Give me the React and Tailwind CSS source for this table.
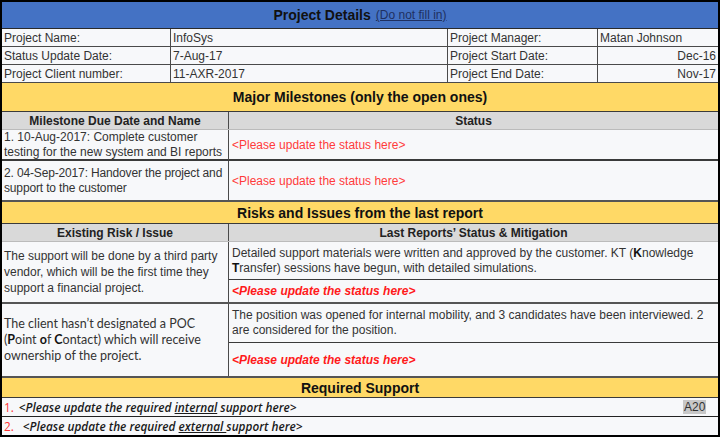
import React from "react";

const details = [
  ["Project Name:", "InfoSys", "Project Manager:", "Matan Johnson", false],
  ["Status Update Date:", "7-Aug-17", "Project Start Date:", "Dec-16", true],
  ["Project Client number:", "11-AXR-2017", "Project End Date:", "Nov-17", true],
];

function YellowBar({ children, className }) {
  return (
    <div
      className={
        "flex items-center justify-center bg-[#ffd966] border-y border-[#3a3a3a] text-[14px] font-bold text-[#111] " +
        className
      }
    >
      {children}
    </div>
  );
}

function RedNote({ strong }) {
  return (
    <span
      className={
        strong
          ? "text-[#ff1a1a] italic font-bold"
          : "text-[#ff3b3b]"
      }
    >
      {"<Please update the status here>"}
    </span>
  );
}

export default function App() {
  return (
    <div className="w-[720px] h-[437px] overflow-hidden border-2 border-black bg-[#f7f8fa] text-[12px] text-[#333] font-['Liberation_Sans',Arial,sans-serif] leading-[14px] relative">
      {/* title */}
      <div className="h-[27px] bg-[#4472c4] border-b border-[#2a2a2a] flex items-center justify-center">
        <span className="text-[14px] font-bold text-[#111]">Project Details</span>
        <span className="ml-[5px] text-[12px] underline text-[#1f3060]">(Do not fill in)</span>
      </div>

      {/* project details */}
      {details.map((r, i) => (
        <div
          key={i}
          className="grid grid-cols-[169px_277px_150px_1fr] h-[18px] border-b border-[#4a4a4a]"
        >
          <div className="px-[2px] flex items-center border-r border-[#4a4a4a]">{r[0]}</div>
          <div className="px-[2px] flex items-center border-r border-[#4a4a4a]">{r[1]}</div>
          <div className="px-[2px] flex items-center border-r border-[#4a4a4a]">{r[2]}</div>
          <div className={"px-[2px] flex items-center " + (r[4] ? "justify-end" : "")}>{r[3]}</div>
        </div>
      ))}

      {/* milestones */}
      <YellowBar className="h-[29px] border-t-0">Major Milestones (only the open ones)</YellowBar>
      <div className="grid grid-cols-[227px_1fr] h-[18px] bg-[#d9d9d9] font-bold text-[#222] border-b border-[#bbb]">
        <div className="flex items-center justify-center border-r border-[#4a4a4a]">Milestone Due Date and Name</div>
        <div className="flex items-center justify-center">Status</div>
      </div>
      <div className="grid grid-cols-[227px_1fr] h-[31px] border-b-2 border-[#3a3a3a]">
        <div className="pl-[2px] flex items-center border-r border-[#4a4a4a] leading-[15px]">
          1. 10-Aug-2017: Complete customer testing for the new system and BI reports
        </div>
        <div className="px-[3px] flex items-center"><RedNote /></div>
      </div>
      <div className="grid grid-cols-[227px_1fr] h-[39px]">
        <div className="pl-[2px] flex items-center border-r border-[#4a4a4a] leading-[15px] tracking-[-0.15px]">
          2. 04-Sep-2017: Handover the project and support to the customer
        </div>
        <div className="px-[3px] flex items-center"><RedNote /></div>
      </div>

      {/* risks */}
      <YellowBar className="h-[24px] border-t-2 border-t-[#555]">Risks and Issues from the last report</YellowBar>
      <div className="grid grid-cols-[227px_1fr] h-[18px] bg-[#d9d9d9] font-bold text-[#222] border-b border-[#bbb]">
        <div className="flex items-center justify-center border-r border-[#4a4a4a]">Existing Risk / Issue</div>
        <div className="flex items-center justify-center">Last Reports’ Status &amp; Mitigation</div>
      </div>
      <div className="grid grid-cols-[227px_1fr] h-[62px] border-b-2 border-[#555]">
        <div className="px-[2px] flex items-center border-r border-[#4a4a4a] leading-[16px]">
          The support will be done by a third party vendor, which will be the first time they support a financial project.
        </div>
        <div className="flex flex-col">
          <div className="h-[38px] px-[3px] flex items-center border-b border-[#3a3a3a] leading-[15px]">
            <span>
              Detailed support materials were written and approved by the customer. KT (<b className="text-[#111]">K</b>nowledge{" "}
              <b className="text-[#111]">T</b>ransfer) sessions have begun, with detailed simulations.
            </span>
          </div>
          <div className="flex-1 px-[3px] flex items-center"><RedNote strong /></div>
        </div>
      </div>
      <div className="grid grid-cols-[227px_1fr] h-[72px]">
        <div className="px-[2px] flex items-center border-r border-[#4a4a4a] leading-[16px] font-['Lato',sans-serif] text-[12.5px]">
          <p>
            The client hasn’t designated a POC (<b className="text-[#111]">P</b>oint <b className="text-[#111]">o</b>f{" "}
            <b className="text-[#111]">C</b>ontact) which will receive ownership of the project.
          </p>
        </div>
        <div className="flex flex-col">
          <div className="h-[39px] px-[3px] flex items-center border-b border-[#3a3a3a] leading-[15px]">
            The position was opened for internal mobility, and 3 candidates have been interviewed. 2 are considered for the position.
          </div>
          <div className="flex-1 px-[3px] flex items-center"><RedNote strong /></div>
        </div>
      </div>

      {/* required support */}
      <YellowBar className="h-[22px] border-t-2 border-t-[#555]">Required Support</YellowBar>
      <div className="h-[19px] px-[2px] flex items-center border-b border-[#222] font-['Open_Sans',sans-serif] text-[11.8px]">
        <span className="text-[#ff3333]">1.</span>
        <span className="ml-[5px] italic font-semibold text-[#1a1a1a]">
          {"<Please update the required "}
          <span className="underline">internal</span>
          {" support here>"}
        </span>
      </div>
      <div className="h-[18px] px-[2px] flex items-center font-['Open_Sans',sans-serif] text-[11.8px]">
        <span className="text-[#ff3333]">2.</span>
        <span className="ml-[9px] italic font-semibold text-[#1a1a1a]">
          {"<Please update the required "}
          <span className="underline">{"external "}</span>
          {"support here>"}
        </span>
      </div>

      <div className="absolute left-[681px] top-[398px] h-[14px] px-[1px] bg-[#c8c8c8] text-[#333] text-[12px] leading-[14px]">
        A20
      </div>
    </div>
  );
}
